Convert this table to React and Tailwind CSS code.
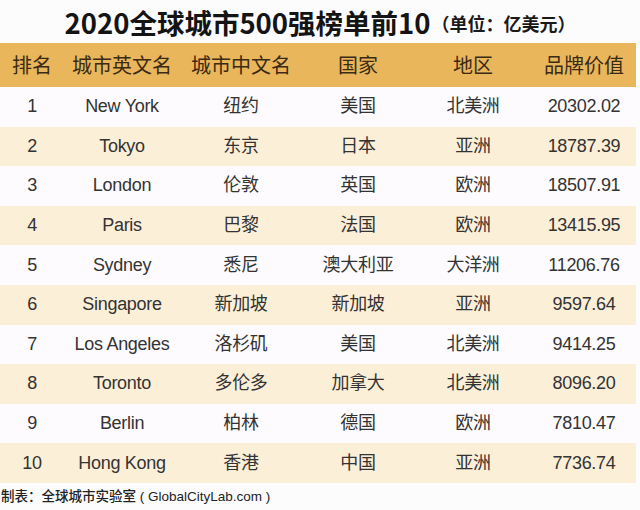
import React from "react";

const rows = [
  ["1", "New York", "纽约", "美国", "北美洲", "20302.02"],
  ["2", "Tokyo", "东京", "日本", "亚洲", "18787.39"],
  ["3", "London", "伦敦", "英国", "欧洲", "18507.91"],
  ["4", "Paris", "巴黎", "法国", "欧洲", "13415.95"],
  ["5", "Sydney", "悉尼", "澳大利亚", "大洋洲", "11206.76"],
  ["6", "Singapore", "新加坡", "新加坡", "亚洲", "9597.64"],
  ["7", "Los Angeles", "洛杉矶", "美国", "北美洲", "9414.25"],
  ["8", "Toronto", "多伦多", "加拿大", "北美洲", "8096.20"],
  ["9", "Berlin", "柏林", "德国", "欧洲", "7810.47"],
  ["10", "Hong Kong", "香港", "中国", "亚洲", "7736.74"],
];

const headers = ["排名", "城市英文名", "城市中文名", "国家", "地区", "品牌价值"];

// column widths, sums to 636
const cols = ["w-[64px]", "w-[116px]", "w-[122px]", "w-[112px]", "w-[118px]", "w-[104px]"];

const font = { fontFamily: '"Liberation Sans", "Noto Sans CJK SC", sans-serif' };
const cjk = { fontFamily: '"Noto Sans CJK SC", sans-serif' };

export default function App() {
  return (
    <div className="w-[640px] h-[510px] bg-[#fdfcfd] overflow-hidden" style={font}>
      {/* Title */}
      <div className="h-[43px] flex items-center justify-center">
        <span className="text-[27.5px] font-bold text-[#141414] leading-[36px]" style={cjk}>
          2020全球城市500强榜单前10
        </span>
        <span className="text-[18px] font-semibold text-[#1a1a1a] leading-[36px] ml-[1px] mt-[2px]" style={cjk}>
          （单位：亿美元）
        </span>
      </div>

      {/* Table */}
      <div className="w-[636px]">
        <div className="h-[44px] bg-[#e9b65b] flex items-center">
          {headers.map((h, i) => (
            <div key={h} className={`${cols[i]} text-center text-[20px] text-[#3b2a14]`} style={cjk}>
              {h}
            </div>
          ))}
        </div>
        {rows.map((r, idx) => (
          <div
            key={r[0]}
            className={`h-[39.6px] flex items-center ${idx % 2 === 1 ? "bg-[#fcefd8]" : "bg-[#fdfbfd]"}`}
          >
            {r.map((c, i) => (
              <div key={i} className={`${cols[i]} text-center text-[18px] text-[#333] tracking-[-0.3px]`}>
                {c}
              </div>
            ))}
          </div>
        ))}
      </div>

      {/* Footer */}
      <div className="h-[27px] flex items-center pl-[1px] pt-[1px] text-[13.5px] font-medium text-[#222]">
        制表：全球城市实验室&nbsp;(&nbsp;GlobalCityLab.com&nbsp;)
      </div>
    </div>
  );
}
